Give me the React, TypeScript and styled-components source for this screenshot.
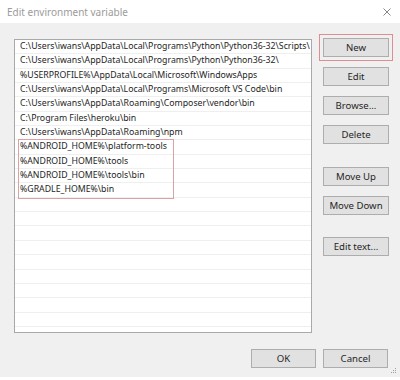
import styled, { createGlobalStyle } from "styled-components";

const GlobalStyle = createGlobalStyle`
  html, body {
    margin: 0;
    padding: 0;
    background: #ffffff;
  }
  * {
    box-sizing: border-box;
  }
`;

const Window = styled.div`
  width: 400px;
  height: 380px;
  display: flex;
  flex-direction: column;
  background: #ffffff;
  font-family: "Noto Sans", "Liberation Sans", sans-serif;
  overflow: hidden;
`;

const TitleBar = styled.div`
  height: 23px;
  flex: none;
  display: flex;
  align-items: center;
  justify-content: space-between;
  padding: 0 9px 0 7px;
  background: #ffffff;
`;

const Title = styled.span`
  font-size: 10px;
  color: #9b9b9b;
`;

const Body = styled.div`
  height: 354px;
  flex: none;
  display: flex;
  flex-direction: column;
  background: #f0f0f0;
  padding: 16px 12px 0 14px;
  position: relative;
`;

const Main = styled.div`
  display: grid;
  grid-template-columns: 298px 66px;
  column-gap: 11px;
`;

const List = styled.div`
  height: 294px;
  background: #ffffff;
  border: 1px solid #a9a9a9;
  overflow: hidden;
`;

const Row = styled.div`
  height: 14.35px;
  border-bottom: 1px solid #efefef;
  padding-left: 5px;
  font-size: 8.75px;
  line-height: 13.35px;
  color: #1e1e1e;
  white-space: nowrap;
`;

const RowGroup = styled.div`
  position: relative;

  &::after {
    content: "";
    position: absolute;
    left: 3px;
    width: 154px;
    top: -1px;
    bottom: -1px;
    border: 1px solid #d9a3a6;
    pointer-events: none;
  }
`;

const ButtonColumn = styled.div`
  display: flex;
  flex-direction: column;
  margin-top: -1px;
`;

const Button = styled.button<{ $space?: number }>`
  width: 66px;
  height: 19px;
  margin-top: ${(p) => (p.$space === undefined ? 10 : p.$space)}px;
  padding: 0;
  background: #e1e1e1;
  border: 1px solid #adadad;
  font-family: "Noto Sans", "Liberation Sans", sans-serif;
  font-size: 9.6px;
  color: #262626;
  line-height: 16px;
`;

const NewButton = styled(Button)`
  outline: 1px solid #e08c90;
  outline-offset: 3px;
`;

const Footer = styled.div`
  display: flex;
  justify-content: flex-end;
  gap: 7px;
  margin-top: 16px;
`;

const FooterButton = styled(Button)`
  width: 65px;
`;

const Grip = styled.svg`
  position: absolute;
  right: 3px;
  bottom: 2px;
`;

const items = [
  "C:\\Users\\iwans\\AppData\\Local\\Programs\\Python\\Python36-32\\Scripts\\",
  "C:\\Users\\iwans\\AppData\\Local\\Programs\\Python\\Python36-32\\",
  "%USERPROFILE%\\AppData\\Local\\Microsoft\\WindowsApps",
  "C:\\Users\\iwans\\AppData\\Local\\Programs\\Microsoft VS Code\\bin",
  "C:\\Users\\iwans\\AppData\\Roaming\\Composer\\vendor\\bin",
  "C:\\Program Files\\heroku\\bin",
  "C:\\Users\\iwans\\AppData\\Roaming\\npm",
];

const marked = [
  "%ANDROID_HOME%\\platform-tools",
  "%ANDROID_HOME%\\tools",
  "%ANDROID_HOME%\\tools\\bin",
  "%GRADLE_HOME%\\bin",
];

const emptyRows = Array.from({ length: 10 });

const App = () => {
  return (
    <Window>
      <GlobalStyle />
      <TitleBar>
        <Title>Edit environment variable</Title>
        <svg width="8" height="8" viewBox="0 0 8 8">
          <path d="M0.5 0.5 L7.5 7.5 M7.5 0.5 L0.5 7.5" stroke="#7a7a7a" strokeWidth="0.9" />
        </svg>
      </TitleBar>
      <Body>
        <Main>
          <List>
            {items.map((t) => (
              <Row key={t}>{t}</Row>
            ))}
            <RowGroup>
              {marked.map((t) => (
                <Row key={t}>{t}</Row>
              ))}
            </RowGroup>
            {emptyRows.map((_, i) => (
              <Row key={i} />
            ))}
          </List>
          <ButtonColumn>
            <NewButton $space={0}>New</NewButton>
            <Button>Edit</Button>
            <Button>Browse...</Button>
            <Button>Delete</Button>
            <Button $space={23}>Move Up</Button>
            <Button>Move Down</Button>
            <Button $space={22}>Edit text...</Button>
          </ButtonColumn>
        </Main>
        <Footer>
          <FooterButton $space={0}>OK</FooterButton>
          <FooterButton $space={0}>Cancel</FooterButton>
        </Footer>
        <Grip width="7" height="7" viewBox="0 0 7 7">
          <rect x="5" y="0" width="1" height="1" fill="#a0a0a0" />
          <rect x="3" y="2" width="1" height="1" fill="#a0a0a0" />
          <rect x="5" y="2" width="1" height="1" fill="#a0a0a0" />
          <rect x="1" y="4" width="1" height="1" fill="#a0a0a0" />
          <rect x="3" y="4" width="1" height="1" fill="#a0a0a0" />
          <rect x="5" y="4" width="1" height="1" fill="#a0a0a0" />
        </Grip>
      </Body>
    </Window>
  );
};

export default App;
